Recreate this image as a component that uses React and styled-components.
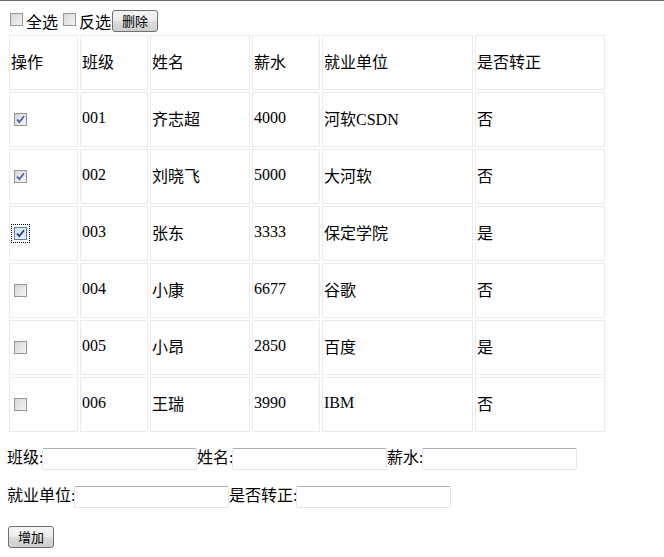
import React from "react";
import styled, { createGlobalStyle, css } from "styled-components";

const Global = createGlobalStyle`
  html { border-top: 1px solid #6e6e6e; background: #fff; }
  body {
    margin: 7px 8px 8px 7px;
    font-family: "Liberation Serif", "Noto Sans CJK SC", serif;
    font-size: 16px;
    color: #000;
  }
`;

const Toolbar = styled.div`
  display: flex;
  align-items: center;
  height: 25px;
`;

const BoxWrap = styled.span`
  display: inline-flex;
  align-items: center;
  justify-content: center;
  box-sizing: border-box;
  width: 13px;
  height: 13px;
  margin: ${(p) => p.$margin || "0"};
  border: 1px solid ${(p) => (p.$focus ? "#5a7fb0" : "#969696")};
  background: ${(p) =>
    p.$focus
      ? "linear-gradient(135deg, #cfe3f5 0%, #eef6fd 100%)"
      : "linear-gradient(135deg, #d6d6d6 0%, #f6f6f6 100%)"};
  position: relative;
  flex: none;
  ${(p) =>
    p.$focus &&
    css`
      outline: 1px dotted #000;
      outline-offset: 2px;
    `}
`;

function CheckBox({ checked, focus, margin }) {
  return (
    <BoxWrap $focus={focus} $margin={margin}>
      {checked && (
        <svg width="9" height="9" viewBox="0 0 9 9">
          <path
            d="M1 4.5 L3.3 7.2 L8 1.2"
            fill="none"
            stroke={focus ? "#1d3e96" : "#4d62a6"}
            strokeWidth="1.8"
          />
        </svg>
      )}
    </BoxWrap>
  );
}

const ToolLabel = styled.span`
  font-family: "Noto Sans CJK SC", sans-serif;
  font-size: 16px;
  line-height: 16px;
  margin-right: ${(p) => p.$mr || "0"};
`;

const Button = styled.button`
  box-sizing: border-box;
  width: 46px;
  height: 22px;
  padding: 0;
  border: 1px solid #707070;
  border-radius: 3px;
  background: linear-gradient(#f4f4f4 0%, #ebebeb 50%, #dcdcdc 51%, #cfcfcf 100%);
  font-family: "Noto Sans CJK SC", sans-serif;
  font-size: 13px;
  line-height: 18px;
  color: #000;
  margin: ${(p) => p.$margin || "0"};
`;

const Table = styled.table`
  border-collapse: separate;
  border-spacing: 2px;
  table-layout: fixed;
  width: 600px;
`;

const Cell = styled.td`
  box-sizing: border-box;
  height: 55px;
  border: 1px solid #ebebeb;
  padding: 0 1px 3px 1px;
  vertical-align: middle;
  font-family: "Liberation Serif", "Noto Sans CJK SC", serif;
  font-size: 16px;
  white-space: nowrap;
  overflow: hidden;
`;

const CheckCell = styled.div`
  display: flex;
  align-items: center;
  padding-left: 3px;
  padding-top: 3px;
`;

const Form = styled.div`
  display: flex;
  flex-direction: column;
  gap: 16px;
  margin-top: 14px;
`;

const Row = styled.div`
  display: flex;
  align-items: center;
  height: 22px;
`;

const Label = styled.span`
  font-family: "Liberation Serif", "Noto Sans CJK SC", serif;
  font-size: 16px;
  line-height: 22px;
  margin-right: -1.5px;
  padding-bottom: 2px;
`;

const Input = styled.input`
  box-sizing: border-box;
  width: 155px;
  height: 22px;
  margin: 0;
  border: 1px solid #e2e5ec;
  border-top-color: #abadb3;
  border-radius: 2px;
  background: #fff;
  padding: 0 2px;
`;

const AddRow = styled.div`
  margin-top: 2px;
  padding-left: 1px;
`;

const widths = [69, 68, 100, 68, 151, 130];

const rows = [
  ["001", "齐志超", "4000", "河软CSDN", "否", true, false],
  ["002", "刘晓飞", "5000", "大河软", "否", true, false],
  ["003", "张东", "3333", "保定学院", "是", true, true],
  ["004", "小康", "6677", "谷歌", "否", false, false],
  ["005", "小昂", "2850", "百度", "是", false, false],
  ["006", "王瑞", "3990", "IBM", "否", false, false],
];

export default function App() {
  return (
    <>
      <Global />
      <Toolbar>
        <CheckBox margin="0 3px 3px 3px" />
        <ToolLabel $mr="5px">全选</ToolLabel>
        <CheckBox margin="0 3px 3px 0" />
        <ToolLabel>反选</ToolLabel>
        <Button $margin="0 0 0 1px">删除</Button>
      </Toolbar>
      <Table>
        <colgroup>
          {widths.map((w, i) => (
            <col key={i} style={{ width: w }} />
          ))}
        </colgroup>
        <tbody>
          <tr>
            <Cell>操作</Cell>
            <Cell>班级</Cell>
            <Cell>姓名</Cell>
            <Cell>薪水</Cell>
            <Cell>就业单位</Cell>
            <Cell>是否转正</Cell>
          </tr>
          {rows.map((r) => (
            <tr key={r[0]}>
              <Cell>
                <CheckCell>
                  <CheckBox checked={r[5]} focus={r[6]} />
                </CheckCell>
              </Cell>
              <Cell>{r[0]}</Cell>
              <Cell>{r[1]}</Cell>
              <Cell>{r[2]}</Cell>
              <Cell>{r[3]}</Cell>
              <Cell>{r[4]}</Cell>
            </tr>
          ))}
        </tbody>
      </Table>
      <Form>
        <Row>
          <Label>班级:</Label>
          <Input />
          <Label>姓名:</Label>
          <Input />
          <Label>薪水:</Label>
          <Input />
        </Row>
        <Row>
          <Label>就业单位:</Label>
          <Input />
          <Label>是否转正:</Label>
          <Input />
        </Row>
        <AddRow>
          <Button>增加</Button>
        </AddRow>
      </Form>
    </>
  );
}
